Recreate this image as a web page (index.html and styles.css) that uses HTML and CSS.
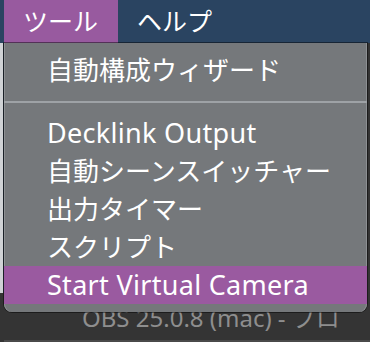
FILE: index.html
```html
<!DOCTYPE html>
<html lang="ja">
<head>
<meta charset="utf-8">
<link rel="stylesheet" href="styles.css">
</head>
<body>
<div class="menubar">
  <div class="menubar-item active">ツール</div>
  <div class="menubar-item">ヘルプ</div>
</div>
<div class="main">
  <div class="side"></div>
  <div class="content">
    <div class="title">OBS 25.0.8 (mac) - プロ</div>
  </div>
  <div class="dropdown">
    <div class="item">自動構成ウィザード</div>
    <div class="separator"></div>
    <div class="item latin">Decklink Output</div>
    <div class="item">自動シーンスイッチャー</div>
    <div class="item">出力タイマー</div>
    <div class="item">スクリプト</div>
    <div class="item latin selected">Start Virtual Camera</div>
  </div>
</div>
</body>
</html>
```

FILE: styles.css
```css
html, body {
  margin: 0;
  padding: 0;
}
body {
  width: 370px;
  height: 342px;
  overflow: hidden;
  background: #343434;
  font-family: "Noto Sans", "Noto Sans CJK JP", sans-serif;
}
.menubar {
  display: flex;
  height: 43px;
  padding-left: 4px;
  background: #2a4461;
}
.menubar-item {
  padding: 0 20px 0 19px;
  line-height: 43px;
  font-size: 25px;
  color: #ffffff;
}
.menubar-item.active {
  background: #985a9f;
}
.main {
  position: relative;
  display: flex;
  height: 299px;
}
.side {
  width: 4px;
  height: 250px;
  background: #cfd2d5;
  border-right: 1px solid #2f3a46;
  box-sizing: border-box;
}
.content {
  flex: 1;
  display: flex;
  flex-direction: column;
  justify-content: flex-end;
  padding-bottom: 8px;
  border-bottom: 2px solid #4a4a4a;
  overflow: hidden;
}
.title {
  padding-left: 78px;
  font-size: 24px;
  line-height: 28px;
  color: #8e8e8e;
  white-space: nowrap;
}
.dropdown {
  position: absolute;
  left: 4px;
  top: 0;
  width: 363px;
  padding: 8px 0;
  background: #75787b;
  border-radius: 0 0 8px 8px;
  box-shadow: inset 1px 0 0 #8d9093, inset -1px 0 0 #8d9093, 0 0 0 1px rgba(0,0,0,0.45);
  overflow: hidden;
}
.item {
  height: 38px;
  line-height: 38px;
  padding-left: 43px;
  font-size: 26px;
  color: #ffffff;
  white-space: nowrap;
}
.item.latin {
  font-size: 27px;
  letter-spacing: 0.3px;
}
.item.selected {
  background: #9a5aa0;
}
.separator {
  height: 2px;
  margin: 12px 0 11px;
  background: #9ea2a6;
}
```
